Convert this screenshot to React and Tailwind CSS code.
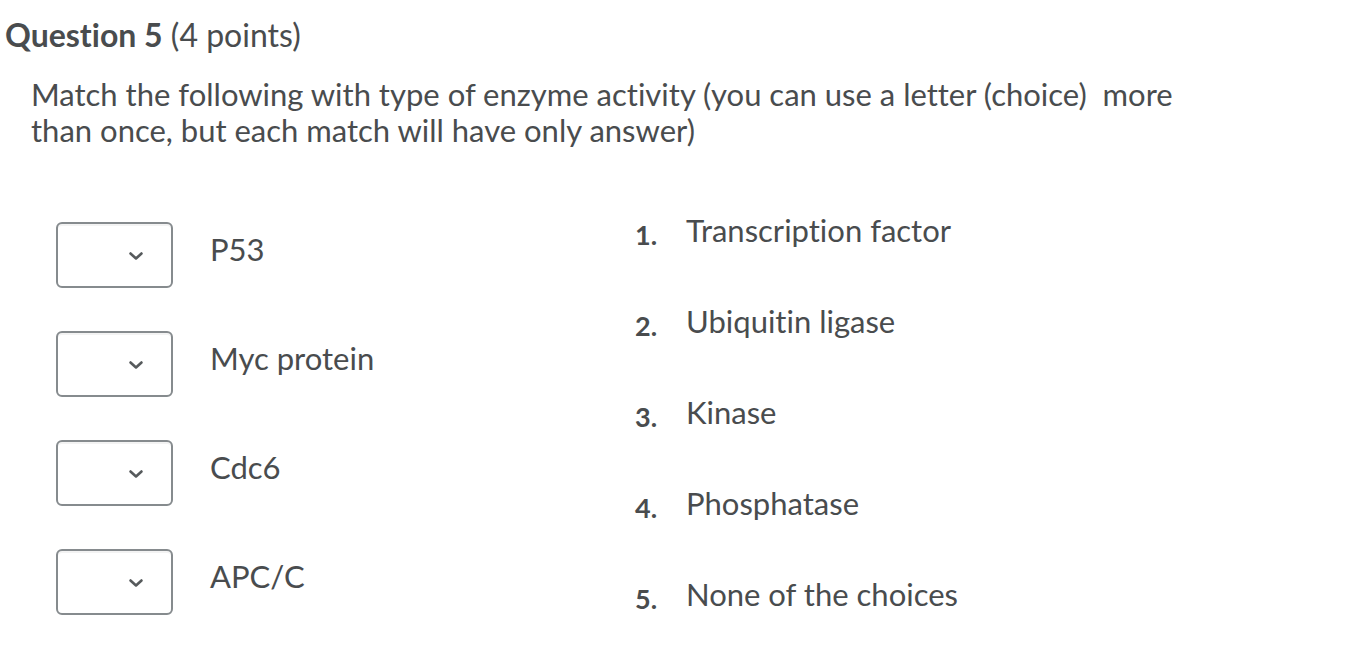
import { useState } from 'react';

const items = ['P53', 'Myc protein', 'Cdc6', 'APC/C'];
const choices = ['Transcription factor', 'Ubiquitin ligase', 'Kinase', 'Phosphatase', 'None of the choices'];

function Chevron() {
  return (
    <svg width="16" height="10" viewBox="0 0 16 10" className="text-[#565a5c]">
      <path d="M2.5 2.5l5.5 5 5.5-5" fill="none" stroke="currentColor" strokeWidth="2.6" strokeLinecap="round" strokeLinejoin="round" />
    </svg>
  );
}

function MatchSelect({ value, onChange }) {
  return (
    <div className="relative w-[117px] h-[66px] rounded-md border-2 border-[#868b8e] bg-white shadow-[inset_0_2px_0_#f3f3f3]">
      <select
        value={value}
        onChange={(e) => onChange(e.target.value)}
        className="absolute inset-0 w-full h-full opacity-0 cursor-pointer"
      >
        <option value=""></option>
        {choices.map((c, i) => (
          <option key={c} value={i + 1}>{i + 1}</option>
        ))}
      </select>
      <div className="flex h-full items-center justify-end pr-[27px] pt-[1px] pointer-events-none">
        <Chevron />
      </div>
    </div>
  );
}

export default function App() {
  const [answers, setAnswers] = useState(['', '', '', '']);

  return (
    <div className="min-h-screen bg-white text-[#494c4e] font-['Lato','Open_Sans',sans-serif] [font-variant-ligatures:none]">
      <h1 className="pl-[5px] pt-[16px] text-[32px] leading-[38px]">
        <span className="font-bold">Question 5</span> (4 points)
      </h1>
      <p className="pl-[31px] pt-[22px] text-[31px] leading-[36px]">
        Match the following with type of enzyme activity (you can use a letter (choice)&nbsp; more<br />
        than once, but each match will have only answer)
      </p>

      <div className="flex pt-[74px]">
        <div className="flex flex-col gap-[43px] pl-[56px] w-[635px]">
          {items.map((label, i) => (
            <div key={label} className="flex items-start gap-[37px]">
              <MatchSelect
                value={answers[i]}
                onChange={(v) => setAnswers(answers.map((a, j) => (j === i ? v : a)))}
              />
              <span className="text-[31px] leading-[36px] pt-[9px]">{label}</span>
            </div>
          ))}
        </div>

        <ol className="flex flex-col gap-[55px] -mt-[10px]">
          {choices.map((c, i) => (
            <li key={c} className="flex items-baseline h-[36px]">
              <span className="w-[51px] font-bold text-[27px] translate-y-[3px]">{i + 1}.</span>
              <span className="text-[31px] leading-[36px]">{c}</span>
            </li>
          ))}
        </ol>
      </div>
    </div>
  );
}
